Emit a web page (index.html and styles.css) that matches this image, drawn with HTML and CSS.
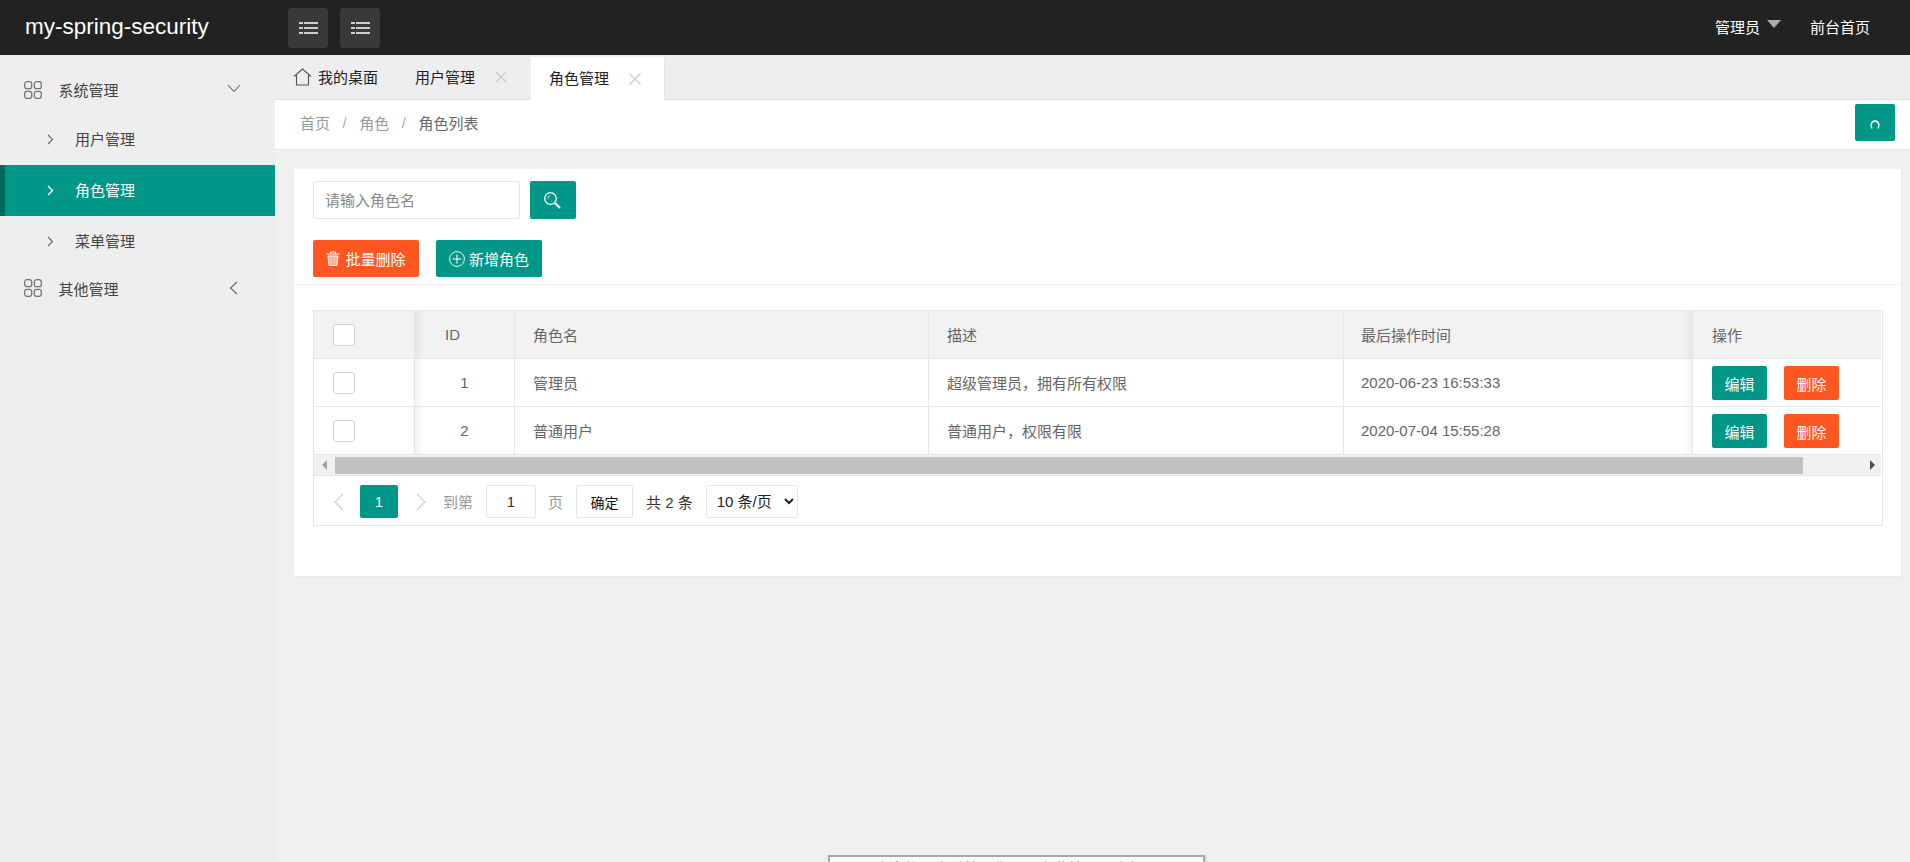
FILE: index.html
```html
<!DOCTYPE html>
<html lang="zh-CN">
<head>
<meta charset="UTF-8">
<meta name="viewport" content="width=device-width, initial-scale=1.0">
<title>my-spring-security</title>
<link rel="stylesheet" href="styles.css">
</head>
<body>
<div class="header">
    <div class="logo">my-spring-security</div>
    <div class="header-btn"><svg width="19" height="12" viewBox="0 0 19 12"><path d="M0 1h4M5 1h14M0 6h4M5 6h14M0 11h4M5 11h14" stroke="#fff" stroke-width="1.500"/></svg></div>
    <div class="header-btn"><svg width="19" height="12" viewBox="0 0 19 12"><path d="M0 1h4M5 1h14M0 6h4M5 6h14M0 11h4M5 11h14" stroke="#fff" stroke-width="1.500"/></svg></div>
    <div class="header-right">
        <span>管理员</span><span class="caret"></span>
        <span class="home-link">前台首页</span>
    </div>
</div>

<div class="layout">
    <div class="sidebar">
        <div class="menu-title">
            <svg class="menu-icon" width="18" height="18" viewBox="0 0 18 18"><g fill="none" stroke="#777" stroke-width="1.300"><rect x="0.700" y="0.700" width="7" height="7" rx="2.200"/><rect x="10.300" y="0.700" width="7" height="7" rx="2.200"/><rect x="0.700" y="10.300" width="7" height="7" rx="2.200"/><rect x="10.300" y="10.300" width="7" height="7" rx="2.200"/></g></svg>
            <span>系统管理</span>
            <svg class="menu-arrow" width="14" height="9" viewBox="0 0 14 9"><path d="M1 1l6 6.500L13 1" fill="none" stroke="#666" stroke-width="1.100"/></svg>
        </div>
        <div class="menu-item"><svg width="7" height="11" viewBox="0 0 7 11"><path d="M1 1l4.500 4.500L1 10" fill="none" stroke="#666" stroke-width="1.100"/></svg><span>用户管理</span></div>
        <div class="menu-item active"><svg width="7" height="11" viewBox="0 0 7 11"><path d="M1 1l4.500 4.500L1 10" fill="none" stroke="#fff" stroke-width="1.400"/></svg><span>角色管理</span></div>
        <div class="menu-item"><svg width="7" height="11" viewBox="0 0 7 11"><path d="M1 1l4.500 4.500L1 10" fill="none" stroke="#666" stroke-width="1.100"/></svg><span>菜单管理</span></div>
        <div class="menu-title other">
            <svg class="menu-icon" width="18" height="18" viewBox="0 0 18 18"><g fill="none" stroke="#777" stroke-width="1.300"><rect x="0.700" y="0.700" width="7" height="7" rx="2.200"/><rect x="10.300" y="0.700" width="7" height="7" rx="2.200"/><rect x="0.700" y="10.300" width="7" height="7" rx="2.200"/><rect x="10.300" y="10.300" width="7" height="7" rx="2.200"/></g></svg>
            <span>其他管理</span>
            <svg class="menu-arrow back" width="9" height="14" viewBox="0 0 9 14"><path d="M8 1L1.500 7 8 13" fill="none" stroke="#666" stroke-width="1.100"/></svg>
        </div>
    </div>

    <div class="main">
        <div class="tabs">
            <div class="tab tab-home"><svg width="19" height="18" viewBox="0 0 19 18"><path d="M1 8.500L9.500 1 18 8.500M3.500 7v10h12V7" fill="none" stroke="#555" stroke-width="1.100"/></svg><span>我的桌面</span></div>
            <div class="tab tab-user"><span>用户管理</span><svg class="tab-close" width="12" height="12" viewBox="0 0 12 12"><path d="M0.500 0.500l11 11M11.500 0.500l-11 11" stroke="#c8c8c8" stroke-width="1.100"/></svg></div>
            <div class="tab tab-active"><span>角色管理</span><svg class="tab-close" width="12" height="12" viewBox="0 0 12 12"><path d="M0.500 0.500l11 11M11.500 0.500l-11 11" stroke="#c8c8c8" stroke-width="1.100"/></svg></div>
        </div>

        <div class="breadcrumb">
            <span>首页</span><span class="sep">/</span><span>角色</span><span class="sep">/</span><span class="current">角色列表</span>
            <div class="refresh"><svg width="10" height="9" viewBox="0 0 10 9"><path d="M2 8.500C0.500 6 1 1 5 1s4.500 5 3 7.500" fill="none" stroke="#fff" stroke-width="1.400"/></svg></div>
        </div>

        <div class="content">
            <div class="card">
                <div class="search-row">
                    <input class="search-input" type="text" placeholder="请输入角色名">
                    <div class="btn search-btn"><svg width="17" height="17" viewBox="0 0 17 17"><g fill="none" stroke="#fff"><circle cx="6.500" cy="6.500" r="5.800" stroke-width="1.300"/><path d="M11 11l5 5" stroke-width="2.200"/><path d="M4 6.500c0-1.500.7-2.500 1.800-3" stroke-width="1"/></g></svg></div>
                </div>
                <div class="toolbar">
                    <div class="btn btn-danger toolbar-btn"><svg width="14" height="15" viewBox="0 0 14 15"><path d="M0.500 3h13M4.500 3V1h5v2" fill="none" stroke="#fff" stroke-width="1"/><path d="M2 5h10l-1 9.500H3z" fill="#fff" fill-opacity=".55" stroke="#fff" stroke-width="1"/></svg><span>批量删除</span></div>
                    <div class="btn toolbar-btn add-btn"><svg width="16" height="16" viewBox="0 0 16 16"><g fill="none" stroke="#fff" stroke-width=".9"><circle cx="8" cy="8" r="7.400"/><path d="M8 3.500v9M3.500 8h9" stroke-width="1.100"/></g></svg><span>新增角色</span></div>
                </div>

                <div class="table-box">
                    <table class="role-table">
                        <colgroup>
                            <col class="col-check"><col class="col-id"><col class="col-name"><col class="col-desc"><col class="col-time"><col class="col-op">
                        </colgroup>
                        <thead>
                            <tr>
                                <th class="cell-check"><div class="checkbox"></div></th>
                                <th class="cell-id">ID</th>
                                <th>角色名</th>
                                <th>描述</th>
                                <th class="cell-time">最后操作时间</th>
                                <th class="cell-op">操作</th>
                            </tr>
                        </thead>
                        <tbody>
                            <tr>
                                <td class="cell-check"><div class="checkbox"></div></td>
                                <td class="cell-id">1</td>
                                <td>管理员</td>
                                <td>超级管理员，拥有所有权限</td>
                                <td class="cell-time">2020-06-23 16:53:33</td>
                                <td class="cell-op"><div class="btn row-btn">编辑</div><div class="btn btn-danger row-btn">删除</div></td>
                            </tr>
                            <tr>
                                <td class="cell-check"><div class="checkbox"></div></td>
                                <td class="cell-id">2</td>
                                <td>普通用户</td>
                                <td>普通用户，权限有限</td>
                                <td class="cell-time">2020-07-04 15:55:28</td>
                                <td class="cell-op"><div class="btn row-btn">编辑</div><div class="btn btn-danger row-btn">删除</div></td>
                            </tr>
                        </tbody>
                    </table>
                    <div class="scrollbar">
                        <span class="arrow-left"></span>
                        <div class="scroll-thumb"></div>
                        <span class="arrow-right"></span>
                    </div>
                    <div class="pager">
                        <svg class="pager-prev" width="11" height="18" viewBox="0 0 11 18"><path d="M10 1L2 9l8 8" fill="none" stroke="#d2d2d2" stroke-width="1.400"/></svg>
                        <div class="btn page-current">1</div>
                        <svg class="pager-next" width="10" height="18" viewBox="0 0 10 18"><path d="M1 1l8 8-8 8" fill="none" stroke="#d2d2d2" stroke-width="1.400"/></svg>
                        <span class="pager-label go-label">到第</span>
                        <input class="page-input" type="text" value="1">
                        <span class="pager-label page-label">页</span>
                        <div class="page-ok">确定</div>
                        <span class="page-total">共 2 条</span>
                        <select class="page-size"><option>10 条/页</option></select>
                    </div>
                </div>
            </div>
        </div>
    </div>
</div>

<div class="notice">欢迎使用本系统，您可以在此管理用户权限</div>
</body>
</html>
```
FILE: styles.css
```css
body {
    font-family: "Liberation Sans", "Noto Sans CJK SC", sans-serif;
    font-size: 15px;
    color: #666;
    background-color: #f0f0f0;
    margin: 0;
    height: 862px;
    overflow: hidden;
}

/* top bar */
.header {
    height: 55px;
    background-color: #222;
    display: flex;
    align-items: center;
    color: #fff;
}

.logo {
    width: 288px;
    padding-left: 25px;
    box-sizing: border-box;
    font-size: 22.500px;
    position: relative;
    top: -1px;
}

.header-btn {
    width: 40px;
    height: 40px;
    margin-right: 12px;
    background-color: #393939;
    border-radius: 4px;
    display: flex;
    align-items: center;
    justify-content: center;
}

.header-right {
    margin-left: auto;
    padding-right: 40px;
    display: flex;
    align-items: center;
    position: relative;
    top: -1px;
}

.caret {
    width: 0;
    height: 0;
    margin: -5px 0 0 7px;
    border-left: 7.500px solid transparent;
    border-right: 7.500px solid transparent;
    border-top: 8px solid #aaa;
}

.home-link {
    margin-left: 29px;
}

/* page frame */
.layout {
    display: flex;
    height: 807px;
}

.sidebar {
    width: 275px;
    flex-shrink: 0;
    background-color: #eee;
    padding-top: 10px;
    box-sizing: border-box;
    color: #444;
}

.menu-title {
    height: 49px;
    display: flex;
    align-items: center;
    padding-left: 24px;
    padding-right: 34px;
}

.menu-title span {
    margin-left: 16.500px;
}

.menu-title.other {
    height: 42px;
}

.menu-arrow {
    margin-left: auto;
    margin-top: -3px;
}

.menu-arrow.back {
    margin-top: -1px;
    margin-right: 3px;
}

.menu-item {
    height: 51px;
    display: flex;
    align-items: center;
    padding-left: 47px;
}

.menu-item span {
    margin-left: 21px;
    margin-bottom: 2px;
}

.menu-item.active {
    background-color: #009688;
    border-left: 5px solid #00695c;
    padding-left: 42px;
    color: #fff;
}

.main {
    flex-grow: 1;
    min-width: 0;
}

/* tabs */
.tabs {
    height: 45px;
    box-sizing: border-box;
    background-color: #eeeef0;
    border-bottom: 1px solid #e2e2e2;
    display: flex;
    align-items: flex-end;
    color: #222;
}

.tab {
    height: 44px;
    display: flex;
    align-items: center;
}

.tab span {
    margin-bottom: 2px;
}

.tab-home {
    padding-left: 18px;
    width: 140px;
    box-sizing: border-box;
}

.tab-home span {
    margin-left: 6px;
}

.tab-user {
    width: 116px;
}

.tab-active {
    width: 134px;
    height: 43px;
    margin-bottom: -1px;
    padding-left: 18px;
    box-sizing: border-box;
    background-color: #fff;
    border-right: 1px solid #e6e6e6;
}

.tab-close {
    margin-left: 20px;
}

/* breadcrumb */
.breadcrumb {
    height: 50px;
    box-sizing: border-box;
    background-color: #fff;
    border-bottom: 1px solid #e6e6e6;
    padding: 0 15px 4px 25px;
    display: flex;
    align-items: center;
    color: #999;
}

.sep {
    margin: 0 12.500px;
    color: #aaa;
}

.current {
    color: #666;
}

.refresh {
    margin-left: auto;
    width: 40px;
    height: 37px;
    background-color: #009688;
    border-radius: 2px;
    display: flex;
    align-items: center;
    justify-content: center;
    padding-top: 4px;
    box-sizing: border-box;
}

/* card */
.content {
    padding: 19px 9px 0 19px;
}

.card {
    height: 407px;
    box-sizing: border-box;
    background-color: #fff;
    padding: 12px 18px 0 19px;
    box-shadow: 0 1px 2px rgba(0, 0, 0, 0.05);
}

.search-row {
    display: flex;
    height: 38px;
}

.search-input {
    width: 207px;
    height: 38px;
    box-sizing: border-box;
    padding: 0 11px;
    border: 1px solid #e6e6e6;
    border-radius: 2px;
    outline: none;
    font: inherit;
}

.search-input::placeholder {
    color: #888;
}

.btn {
    background-color: #009688;
    color: #fff;
    border-radius: 2px;
    display: flex;
    align-items: center;
    justify-content: center;
}

.btn-danger {
    background-color: #ff5722;
}

.search-btn {
    width: 46px;
    margin-left: 10px;
    padding-right: 2px;
    box-sizing: border-box;
}

.toolbar {
    display: flex;
    margin-top: 21px;
    height: 44px;
    margin-left: -19px;
    margin-right: -18px;
    padding-left: 19px;
    border-bottom: 1px solid #f3f3f3;
}

.toolbar-btn {
    height: 37px;
    width: 106px;
}

.toolbar-btn span {
    margin-left: 5px;
}

.add-btn {
    margin-left: 17px;
}

.add-btn span {
    margin-left: 4px;
}

/* table */
.table-box {
    margin-top: 25px;
    height: 216px;
    box-sizing: border-box;
    border: 1px solid #e6e6e6;
}

.role-table {
    width: 1567px;
    table-layout: fixed;
    border-collapse: separate;
    border-spacing: 0;
}

.col-check { width: 101px; }
.col-id { width: 100px; }
.col-name { width: 414px; }
.col-desc { width: 415px; }
.col-time { width: 349px; }
.col-op { width: 188px; }

.role-table th, .role-table td {
    height: 48px;
    box-sizing: border-box;
    padding: 0 0 0 18px;
    border-right: 1px solid #e6e6e6;
    border-bottom: 1px solid #e6e6e6;
    font-weight: normal;
    text-align: left;
}

.role-table th {
    background-color: #f2f2f2;
}

.role-table th:last-child, .role-table td:last-child {
    border-right: none;
}

.role-table .cell-check {
    padding-left: 19px;
}

.role-table .cell-id {
    padding-left: 0;
    text-align: center;
    background-image: linear-gradient(to right, rgba(0, 0, 0, 0.05), rgba(0, 0, 0, 0) 9px);
}

.role-table th.cell-id {
    padding-left: 30px;
    text-align: left;
}

.role-table .cell-time {
    padding-left: 17px;
    background-image: linear-gradient(to left, rgba(0, 0, 0, 0.05), rgba(0, 0, 0, 0) 9px);
}

.role-table .cell-op {
    padding-left: 19px;
}

.role-table td.cell-op {
    padding-top: 1px;
}

.checkbox {
    width: 22px;
    height: 22px;
    box-sizing: border-box;
    background-color: #fff;
    border: 1px solid #d2d2d2;
    border-radius: 3px;
}

.row-btn {
    display: inline-flex;
    width: 55px;
    height: 34px;
    margin-right: 17px;
    vertical-align: middle;
}

/* scrollbar under the table */
.scrollbar {
    width: 1567px;
    height: 21px;
    box-sizing: border-box;
    background-color: #f1f1f1;
    border-bottom: 1px solid #e6e6e6;
    display: flex;
    align-items: center;
}

.scroll-thumb {
    width: 1468px;
    height: 17px;
    margin-top: 1px;
    background-color: #c1c1c1;
}

.arrow-left {
    width: 21px;
    position: relative;
    height: 12px;
}

.arrow-left::after {
    content: "";
    position: absolute;
    left: 8px;
    top: 1px;
    border-top: 5px solid transparent;
    border-bottom: 5px solid transparent;
    border-right: 5px solid #a3a3a3;
}

.arrow-right {
    margin-left: auto;
    margin-right: 6px;
    border-top: 5px solid transparent;
    border-bottom: 5px solid transparent;
    border-left: 5px solid #505050;
}

/* pager */
.pager {
    display: flex;
    align-items: center;
    padding: 9px 0 0 19px;
    height: 33px;
    color: #333;
}

.page-current {
    width: 38px;
    height: 33px;
    margin-left: 16px;
}

.pager-next {
    margin-left: 18px;
}

.pager-label {
    color: #999;
}

.go-label {
    margin-left: 17px;
}

.page-input {
    width: 50px;
    height: 33px;
    box-sizing: border-box;
    margin-left: 13px;
    border: 1px solid #e6e6e6;
    border-radius: 2px;
    outline: none;
    text-align: center;
    font: inherit;
    color: #333;
}

.page-label {
    margin-left: 12px;
}

.page-ok {
    width: 57px;
    height: 33px;
    box-sizing: border-box;
    margin-left: 13px;
    border: 1px solid #e6e6e6;
    border-radius: 2px;
    background-color: #fff;
    color: #111;
    font-size: 14px;
    display: flex;
    align-items: center;
    justify-content: center;
}

.page-total {
    margin-left: 13px;
}

.page-size {
    width: 92px;
    height: 33px;
    margin-left: 13px;
    padding-left: 6px;
    background-color: #fff;
    border: 1px solid #e6e6e6;
    border-radius: 2px;
    font: inherit;
    color: #222;
}

/* box cut off by the bottom of the window */
.notice {
    position: fixed;
    left: 828px;
    top: 855px;
    width: 377px;
    height: 40px;
    box-sizing: border-box;
    background-color: #f9f9f9;
    border: 2px solid #a9a9a9;
    box-shadow: 1px 1px 2px rgba(0, 0, 0, 0.2);
    color: #888;
    text-align: center;
    white-space: nowrap;
    overflow: hidden;
}
```
